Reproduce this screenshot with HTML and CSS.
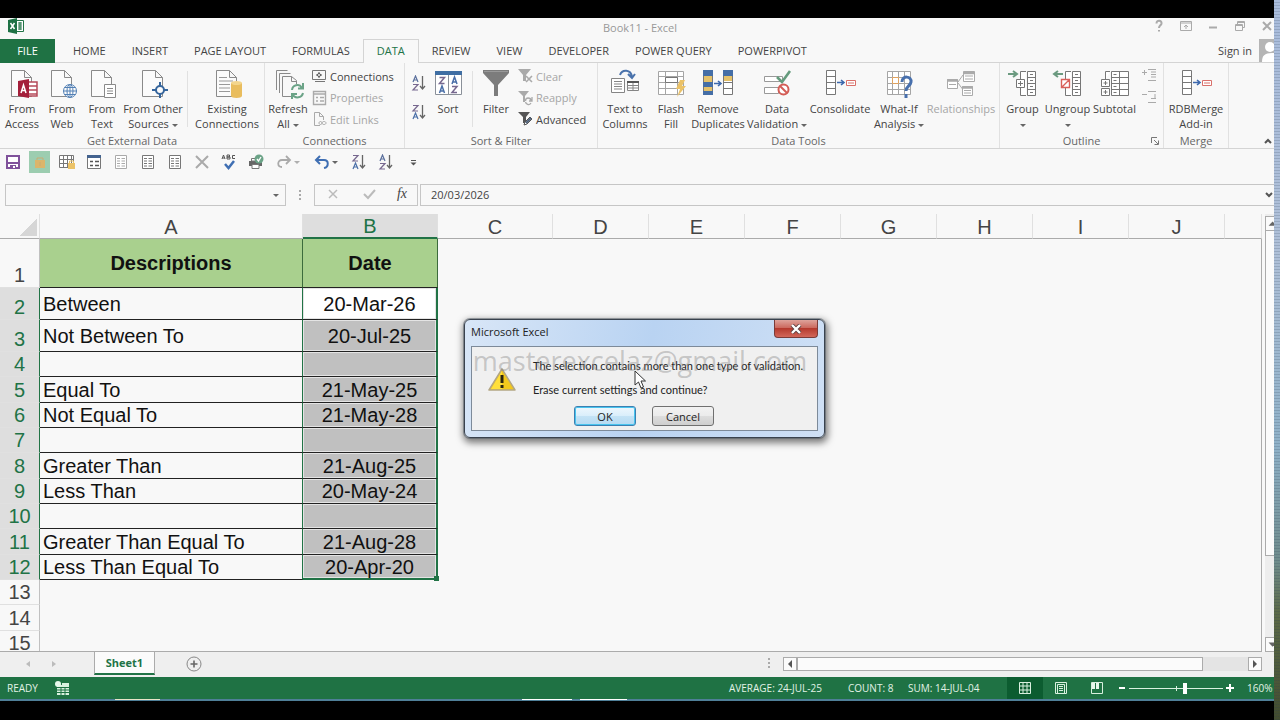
FILE: index.html
```html
<!DOCTYPE html>
<html lang="en">
<head>
    <meta charset="UTF-8">
    <meta name="viewport" content="width=device-width, initial-scale=1.0">
    <title>Book11 - Excel</title>
    <link rel="stylesheet" href="styles.css">
</head>
<body>
    <!-- Shared icon parts -->
    <svg class="sprite" aria-hidden="true">
        <symbol id="page" viewBox="0 0 32 32">
            <path d="M5.500 2.500h13l7 7v19h-20zM18.500 2.500v7h7" fill="#fbfbfb" stroke="#8a8a8a"/>
        </symbol>
        <symbol id="az" viewBox="0 0 16 16">
            <path d="M2 7l2.500-6L7 7M3 5h3" fill="none" stroke="#5a6f9c" stroke-width="1.200"/>
            <path d="M2 9.500h5L2 15h5" fill="none" stroke="#77688f" stroke-width="1.200"/>
            <path d="M11.500 1v13M9 11l2.500 3 2.500-3" fill="none" stroke="#666" stroke-width="1.300"/>
        </symbol>
        <symbol id="za" viewBox="0 0 16 16">
            <path d="M2 1.500h5L2 7h5" fill="none" stroke="#77688f" stroke-width="1.200"/>
            <path d="M2 15l2.500-6L7 15M3 13h3" fill="none" stroke="#4a6fa8" stroke-width="1.200"/>
            <path d="M11.500 1v13M9 11l2.500 3 2.500-3" fill="none" stroke="#666" stroke-width="1.300"/>
        </symbol>
        <symbol id="merge" viewBox="0 0 32 32">
            <path d="M2.500 2.500h9v24h-9zM2.500 8.500h9M2.500 14.500h9M2.500 20.500h9" fill="#fff" stroke="#777"/>
            <path d="M13 14.500h6M17 12l3 2.500-3 2.500" fill="none" stroke="#3c68ad" stroke-width="1.600"/>
            <path d="M22.500 12.500h9v5h-9zM24 15h6" fill="#fff" stroke="#d9706b"/>
        </symbol>
        <symbol id="list" viewBox="0 0 16 16">
            <path d="M2.500 1.500h11v13h-11z" fill="#fff" stroke="currentColor"/>
            <path d="M4 4.500h3M8.500 4.500H12M4 7h3M8.500 7H12M4 9.500h3M8.500 9.500H12M4 12h3M8.500 12H12" fill="none" stroke="currentColor"/>
        </symbol>
    </svg>

    <div class="app">
        <!-- Title bar -->
        <header class="titlebar">
            <svg class="logo" viewBox="0 0 16 16">
                <path d="M8 2.500h7.500v11H8z" fill="#fff" stroke="#217346"/>
                <path d="M10 5h4M10 7h4M10 9h4M10 11h4M12 4v8" stroke="#217346"/>
                <path d="M0 2l9-2v16l-9-2z" fill="#1e7145"/>
                <path d="M2.500 5l4 6M6.500 5l-4 6" stroke="#fff" stroke-width="1.500"/>
            </svg>
            <h1>Book11 - Excel</h1>
            <div class="window-buttons">
                <button aria-label="Help"><svg viewBox="0 0 16 16"><path d="M5.500 5.500c0-4 5.500-3.500 5 0-.3 1.800-2.500 2-2.500 4.500M8 12v1.500" fill="none" stroke="currentColor" stroke-width="2"/></svg></button>
                <button aria-label="Ribbon display options"><svg viewBox="0 0 16 16"><path d="M2.500 3.500h11v9h-11zM2.500 5h11M8 11V7M6 9l2-2 2 2" fill="none" stroke="currentColor"/></svg></button>
                <button aria-label="Minimize"><svg viewBox="0 0 16 16"><path d="M4 9.500h8" stroke="currentColor" stroke-width="2"/></svg></button>
                <button aria-label="Restore"><svg viewBox="0 0 16 16"><path d="M3.500 6.500h7v6h-7zM3.500 7.500h7M5.500 6V3.500h7v6H11M5.500 4.500h7" fill="none" stroke="currentColor"/></svg></button>
                <button aria-label="Close"><svg viewBox="0 0 16 16"><path d="M4 4l8 8M12 4l-8 8" stroke="currentColor" stroke-width="2"/></svg></button>
            </div>
        </header>

        <!-- Ribbon tabs -->
        <nav class="tabs">
            <button class="tab file">FILE</button>
            <button class="tab">HOME</button>
            <button class="tab">INSERT</button>
            <button class="tab">PAGE LAYOUT</button>
            <button class="tab">FORMULAS</button>
            <button class="tab active">DATA</button>
            <button class="tab">REVIEW</button>
            <button class="tab">VIEW</button>
            <button class="tab">DEVELOPER</button>
            <button class="tab">POWER QUERY</button>
            <button class="tab">POWERPIVOT</button>
            <a class="sign-in" href="#">Sign in</a>
            <svg class="avatar" viewBox="0 0 15 23"><path d="M0 0h15v23H0z" fill="#b5b5b5"/><circle cx="11" cy="8" r="5" fill="#fff"/><path d="M3 23c0-7 3-9 12-9v9z" fill="#fff"/></svg>
        </nav>

        <!-- Ribbon -->
        <section class="ribbon">
            <div class="group external">
                <div class="tools">
                    <button class="big">
                        <svg viewBox="0 0 32 32"><use href="#page"/><path d="M23 14h8v14h-8M23 18h8M23 22h8M23 26h8" fill="#fff" stroke="#b5495a" stroke-width="1.500"/><path d="M12 13l11-2v19l-11-2z" fill="#a4203b"/><path d="M15 25l2.500-8 2.500 8M16 22.500h3.500" fill="none" stroke="#fff" stroke-width="1.500"/></svg>
                        <span>From<br>Access</span>
                    </button>
                    <button class="big">
                        <svg viewBox="0 0 32 32"><use href="#page"/><g fill="#fbfbfb" stroke="#5280b5"><circle cx="24" cy="23" r="6.500"/><ellipse cx="24" cy="23" rx="3" ry="6.500"/><path d="M17.500 23h13M18.500 19.500h11M18.500 26.500h11M24 16.500v13"/></g></svg>
                        <span>From<br>Web</span>
                    </button>
                    <button class="big">
                        <svg viewBox="0 0 32 32"><use href="#page"/><path d="M18.500 16.500h11v13h-11zM21 20.500h6M21 23h6M21 25.500h6" fill="#fff" stroke="#8a8a8a"/></svg>
                        <span>From<br>Text</span>
                    </button>
                    <button class="big">
                        <svg viewBox="0 0 32 32"><use href="#page"/><path d="M23 14v16M15 22h16" stroke="#35659c" stroke-width="2"/><circle cx="23" cy="22" r="4" fill="#fbfbfb" stroke="#35659c" stroke-width="2"/></svg>
                        <span>From Other<br>Sources <i class="caret"></i></span>
                    </button>
                    <div class="rule"></div>
                    <button class="big">
                        <svg viewBox="0 0 32 32"><use href="#page"/><path d="M8 9.500h8M8 13h14M8 16.500h11M8 20h11M8 23.500h11" stroke="#999"/><path d="M20 15v13c0 2.500 11 2.500 11 0V15z" fill="#e9bd5e"/><ellipse cx="25.500" cy="15" rx="5.500" ry="2" fill="#f3d58c"/></svg>
                        <span>Existing<br>Connections</span>
                    </button>
                </div>
                <h2>Get External Data</h2>
            </div>

            <div class="group connections">
                <div class="tools">
                    <button class="big">
                        <svg viewBox="0 0 32 32"><path d="M4.500 22V2.500h11M7.500 25V5.500h11M24.500 16v-3.500l-5-4h-9v20h9M19.500 8.500v5h5" fill="none" stroke="#8a8a8a"/><path d="M20 22c.5-5 7-7 10-2M31 15v5.500h-5M31 25c-1 5-8 6-10.500 1.500M20 31v-5h5" fill="none" stroke="#6ba387" stroke-width="2"/></svg>
                        <span>Refresh<br>All <i class="caret"></i></span>
                    </button>
                    <div class="stack">
                        <button><svg viewBox="0 0 16 16"><path d="M1.500 2.500h13v9h-13zM4 13.500h10" fill="none" stroke="#777"/><path d="M8 4v6M5 7h6" stroke="#555"/><circle cx="8" cy="7" r="1.500" fill="#fff" stroke="#555"/></svg>Connections</button>
                        <button disabled><svg viewBox="0 0 16 16"><path d="M2.500 1.500h12v13h-12zM2.500 4h12M5 7.500h2M9 7.500h4M5 11h2M9 11h4" fill="none" stroke="#aaa" stroke-width="1.400"/></svg>Properties</button>
                        <button disabled><svg viewBox="0 0 16 16"><path d="M9 14.500H3.500v-13h5l4 4V9M8.500 1.500v4h4M8 12c0-2 3-2 3 0s4 2 4 0-4-2-4 0-3 2-3 0" fill="none" stroke="#aaa"/></svg>Edit Links</button>
                    </div>
                </div>
                <h2>Connections</h2>
            </div>

            <div class="group sorting">
                <div class="tools">
                    <div class="sort-pair">
                        <button aria-label="Sort A to Z"><svg viewBox="0 0 16 16"><use href="#az"/></svg></button>
                        <button aria-label="Sort Z to A"><svg viewBox="0 0 16 16"><use href="#za"/></svg></button>
                    </div>
                    <button class="big">
                        <svg viewBox="0 0 32 32"><path d="M3.500 4.500h26v22h-26zM16.500 7v19" fill="#fff" stroke="#8a9099"/><path d="M3 3h27v4H3z" fill="#3f6ea3"/><path d="M7.500 9.500h5l-5 6h5M20 18.500h5l-5 6h5" fill="none" stroke="#77688f" stroke-width="1.500"/><path d="M7.500 25l2.500-7 2.500 7M8.500 23h3.500M20 16l2.500-7 2.500 7M21 14h3.500" fill="none" stroke="#4a6fa8" stroke-width="1.500"/></svg>
                        <span>Sort</span>
                    </button>
                    <div class="rule"></div>
                    <button class="big">
                        <svg viewBox="0 0 32 32"><path d="M3 2h26v3L18 17v11h-4V17L3 5z" fill="#7c7c7c"/><path d="M4 3.500h24" stroke="#999"/></svg>
                        <span>Filter</span>
                    </button>
                    <div class="stack">
                        <button disabled><svg viewBox="0 0 16 16"><path d="M1 1h13L9 7v6H6V7z" fill="#aaa"/><path d="M9 8l6 6M15 8l-6 6" stroke="#aaa" stroke-width="1.600"/></svg>Clear</button>
                        <button disabled><svg viewBox="0 0 16 16"><path d="M1 1h11L8 6v6H6V6z" fill="#aaa"/><path d="M8.500 11c0-4 5-4 6 0M15 7v4h-3M14 13c-2 3-5 1-5.500-1" fill="none" stroke="#aaa" stroke-width="1.300"/></svg>Reapply</button>
                        <button><svg viewBox="0 0 16 16"><path d="M1 1h12L9 6v6H6V6z" fill="#555"/><path d="M7 14l1-3 5-5 2 2-5 5z" fill="#fff" stroke="#555"/><path d="M9 12l5-5" stroke="#4c5f78" stroke-width="2"/></svg>Advanced</button>
                    </div>
                </div>
                <h2>Sort &amp; Filter</h2>
            </div>

            <div class="group data-tools">
                <div class="tools">
                    <button class="big">
                        <svg viewBox="0 0 32 32"><path d="M2.500 10.500h13v14h-13zM5 13.500h8M5 16h8M5 18.500h8M5 21h8M18.500 13.500h11v9h-11zM18.500 17.500h11M18.500 20h11M24 14v8" fill="#fff" stroke="#858585"/><path d="M18 14h12" stroke="#555" stroke-width="2"/><path d="M11 7c2-6 11-6 12 2M19 6l4 4 3-4" fill="none" stroke="#4a72ab" stroke-width="2"/></svg>
                        <span>Text to<br>Columns</span>
                    </button>
                    <button class="big">
                        <svg viewBox="0 0 32 32"><path d="M3.500 3.500h25v23h-25zM3.500 8.500h25M3.500 14.500h25M3.500 20.500h25M10.500 3.500v23M22.500 3.500v23" fill="#fff" stroke="#a5a5a5"/><path d="M10.500 9.500h12v5h-12z" fill="#fff" stroke="#777"/><path d="M25 12h5l-3 6h4l-9 11 3-8h-4z" fill="#ebc267"/></svg>
                        <span>Flash<br>Fill</span>
                    </button>
                    <button class="big">
                        <svg viewBox="0 0 32 32"><path d="M1.500 2.500h9v24h-9zM21.500 2.500h9v24h-9zM21.500 8.500h9M21.500 14.500h9M21.500 20.500h9" fill="#fff" stroke="#777"/><path d="M1 2h10v6H1zM1 14h10v5H1zM1 23h10v4H1zM21 2h10v6H21z" fill="#456ea6"/><path d="M2 8h8v6H2zM2 19h8v4H2zM22 8h8v5h-8z" fill="#e5c169"/><path d="M12 15.500h6M16 13l3 2.500-3 2.500" fill="none" stroke="#3c68ad" stroke-width="1.600"/></svg>
                        <span>Remove<br>Duplicates</span>
                    </button>
                    <button class="big">
                        <svg viewBox="0 0 32 32"><path d="M3.500 8.500h18v5h-18zM3.500 19.500h14v6h-14z" fill="#fff" stroke="#999"/><path d="M16 9l5 5 8-11" fill="none" stroke="#659b7d" stroke-width="2.600"/><circle cx="22.500" cy="21.500" r="5" fill="#fff" stroke="#d35c55" stroke-width="2"/><path d="M19 18l7 7" stroke="#d35c55" stroke-width="2"/></svg>
                        <span>Data<br>Validation <i class="caret"></i></span>
                    </button>
                    <button class="big">
                        <svg viewBox="0 0 32 32"><use href="#merge"/></svg>
                        <span>Consolidate</span>
                    </button>
                    <button class="big">
                        <svg viewBox="0 0 32 32"><path d="M4.500 3.500h23v23h-23zM4.500 9.500h23M4.500 15.500h23M4.500 21.500h23M9.500 3.500v23M15.500 3.500v23M21.500 3.500v23" fill="#fff" stroke="#a5a5a5"/><path d="M9.500 9.500h6v6h-6z" fill="#fff" stroke="#e0a25e"/><path d="M19 14c0-7 10-6 9 0-.5 4-5 4-5 9M23 26v4" fill="none" stroke="#4870ad" stroke-width="3"/></svg>
                        <span>What-If<br>Analysis <i class="caret"></i></span>
                    </button>
                    <button class="big" disabled>
                        <svg viewBox="0 0 32 32"><path d="M13 14l5-7M13 15l6 8" stroke="#aaa"/><path d="M2.500 11.500h10v9h-10zM4 16.500h7M18.500 3.500h11v10h-11zM20 8h8M20 11h8M17.500 18.500h10v9h-10zM19 22.500h7M19 25h7" fill="#fff" stroke="#aaa"/><path d="M2 12.500h11M18 5h12M17 19.500h11" stroke="#aaa" stroke-width="2.500"/></svg>
                        <span>Relationships</span>
                    </button>
                </div>
                <h2>Data Tools</h2>
            </div>

            <div class="group outline">
                <div class="tools">
                    <button class="big">
                        <svg viewBox="0 0 32 32"><path d="M20.500 3.500h8v24h-8zM20.500 9.500h8M20.500 15.500h8M20.500 21.500h8M23 6.500h3M23 12.500h3M23 18.500h3M23 24.500h3M19 3.500h-5.500v24H19" fill="#fff" stroke="#777"/><path d="M9.500 11.500h8v8h-8zM13.500 13v5M11 15.500h5" fill="#fff" stroke="#777"/><path d="M1 6h8M6 3l4 3-4 3" fill="none" stroke="#6b9a80" stroke-width="2"/></svg>
                        <span>Group<br><i class="caret"></i></span>
                    </button>
                    <button class="big">
                        <svg viewBox="0 0 32 32"><path d="M20.500 3.500h8v24h-8zM20.500 9.500h8M20.500 15.500h8M20.500 21.500h8M23 6.500h3M23 12.500h3M23 18.500h3M23 24.500h3M19 3.500h-5.500v24H19" fill="#fff" stroke="#777"/><path d="M9.500 11.500h8v8h-8zM10 19l7-7" fill="#fff" stroke="#d9605a" stroke-width="1.400"/><path d="M2 6h9M6 3L2 6l4 3" fill="none" stroke="#6b9a80" stroke-width="2"/></svg>
                        <span>Ungroup<br><i class="caret"></i></span>
                    </button>
                    <button class="big">
                        <svg viewBox="0 0 32 32"><path d="M12.500 3.500h17v24h-17zM12.500 9.500h17M12.500 15.500h17M12.500 21.500h17M20.500 3.500v24M14.500 6.500h3M14.500 12.500h3M14.500 18.500h3M14.500 24.500h3M11 3.500H6.500V12" fill="#fff" stroke="#777"/><path d="M2.500 11.500h8v7h-8zM6.500 13v4M4.500 15h4M2.500 20.500h8v7h-8zM6.500 22v4M4.500 24h4" fill="#fff" stroke="#777"/></svg>
                        <span>Subtotal</span>
                    </button>
                    <div class="detail-pair">
                        <button disabled aria-label="Show detail"><svg viewBox="0 0 16 16"><path d="M1 5.500h5M3.500 3v5M7 2.500h8M10 5h5M10 7.500h5M10 10h5M7 13.500h8" stroke="#aaa"/></svg></button>
                        <button disabled aria-label="Hide detail"><svg viewBox="0 0 16 16"><path d="M1 5.500h5M7 2.500h8M14 5v4M10 9.500h5M7 13.500h8" stroke="#aaa"/></svg></button>
                    </div>
                </div>
                <h2>Outline</h2>
                <button class="launcher" aria-label="Outline settings"><svg viewBox="0 0 8 8"><path d="M.5 6V.5H6M3 3l4 4M7.500 3.500v4h-4" fill="none" stroke="#777"/></svg></button>
            </div>

            <div class="group addin">
                <div class="tools">
                    <button class="big">
                        <svg viewBox="0 0 32 32"><use href="#merge"/></svg>
                        <span>RDBMerge<br>Add-in</span>
                    </button>
                </div>
                <h2>Merge</h2>
            </div>
            <button class="collapse" aria-label="Collapse the ribbon"><svg viewBox="0 0 8 8"><path d="M1 6l3-3 3 3" fill="none" stroke="#555" stroke-width="2"/></svg></button>
        </section>

        <!-- Quick access toolbar -->
        <section class="quick">
            <button aria-label="Save"><svg viewBox="0 0 16 16"><path d="M2 2h12v12H2z" fill="#fff" stroke="#80529b" stroke-width="2"/><path d="M3 8h10v2H3zM5 11h6v4H5z" fill="#80529b"/><path d="M8 12h2v2H8z" fill="#fff"/></svg></button>
            <button class="on" aria-label="Lock cell"><svg viewBox="0 0 16 16"><path d="M3 6h10v8H3z" fill="#dcb56b"/><path d="M5 6V4h6v2M8 8v4" fill="none" stroke="#c9ac73"/></svg></button>
            <button aria-label="Protect sheet"><svg viewBox="0 0 16 16"><path d="M.5 1.500h14v12H.5zM.5 5.500h14M.5 9.500h14M4.500 1.500v12M8.500 1.500v12M12.500 1.500v12" fill="#fff" stroke="#777"/><path d="M9 9h7v6H9z" fill="#ebc267"/><path d="M10.500 9V7h4v2" fill="none" stroke="#ebc267"/></svg></button>
            <button aria-label="Form"><svg viewBox="0 0 16 16"><path d="M1.500 1.500h13v13h-13z" fill="#fff" stroke="#777"/><path d="M1 1h14v3H1z" fill="#44638f"/><path d="M4 7.500h3M9 7.500h4M4 11.500h3M9 11.500h4" stroke="#555" stroke-width="1.500"/></svg></button>
            <button class="dim" aria-label="Page setup"><svg viewBox="0 0 16 16"><use href="#list"/></svg></button>
            <button aria-label="Columns"><svg viewBox="0 0 16 16"><use href="#list"/></svg></button>
            <button aria-label="Rows"><svg viewBox="0 0 16 16"><use href="#list"/></svg></button>
            <button class="dim" aria-label="Delete"><svg viewBox="0 0 16 16"><path d="M2 2l12 12M14 2L2 14" stroke="currentColor" stroke-width="2"/></svg></button>
            <button aria-label="Spelling"><svg viewBox="0 0 16 16"><path d="M1 5l1.500-4L4 5M1.500 4h2M6 1h2.500v2H6zM6 3h3v2H6zM14 1.500h-2.500v3H14" fill="none" stroke="#555"/><path d="M4 10l3.500 4L13 7" fill="none" stroke="#3f6fb3" stroke-width="2.500"/></svg></button>
            <button aria-label="Quick print"><svg viewBox="0 0 16 16"><path d="M1 7h13v5H1z" fill="#666"/><path d="M3.500 4.500h6V7h-6zM4 10.500h7v4H4z" fill="#fff" stroke="#777"/><circle cx="11" cy="5" r="4.500" fill="#6ba387"/><path d="M9 5l1.500 2L13 3" fill="none" stroke="#fff" stroke-width="1.300"/></svg></button>
            <button class="split dim" aria-label="Redo"><svg viewBox="0 0 16 16"><path d="M14 6H6C1 6 1 13 6 13M10 2l4 4-4 4" fill="none" stroke="currentColor" stroke-width="1.800"/></svg><i class="caret"></i></button>
            <button class="split" aria-label="Undo"><svg viewBox="0 0 16 16"><path d="M2 6h8c5 0 5 7 0 8M6 2L2 6l4 4" fill="none" stroke="#3f6fb3" stroke-width="2"/></svg><i class="caret"></i></button>
            <button aria-label="Sort descending"><svg viewBox="0 0 16 16"><use href="#za"/></svg></button>
            <button aria-label="Sort ascending"><svg viewBox="0 0 16 16"><use href="#az"/></svg></button>
            <button aria-label="Customize toolbar"><svg viewBox="0 0 16 16"><path d="M6 6.500h5" stroke="#555"/><path d="M5.500 8.500h6l-3 3z" fill="#555"/></svg></button>
        </section>

        <!-- Formula bar -->
        <section class="formula">
            <div class="name-box">
                <input type="text" aria-label="Name box">
                <i class="caret"></i>
            </div>
            <i class="grip"></i>
            <div class="formula-buttons">
                <button aria-label="Cancel entry"><svg viewBox="0 0 16 16"><path d="M4 4l8 8M12 4l-8 8" stroke="#bbb" stroke-width="1.500"/></svg></button>
                <button aria-label="Enter"><svg viewBox="0 0 16 16"><path d="M3 8l4 4 7-8" fill="none" stroke="#bbb" stroke-width="2"/></svg></button>
                <button class="fx" aria-label="Insert function">fx</button>
            </div>
            <div class="formula-text">
                <input type="text" value="20/03/2026" aria-label="Formula bar">
                <svg viewBox="0 0 8 8"><path d="M1 2l3 3 3-3" fill="none" stroke="#555" stroke-width="2"/></svg>
            </div>
        </section>

        <!-- Worksheet -->
        <main class="workspace">
            <div class="sheet">
                <table>
                    <colgroup>
                        <col class="num"><col class="a"><col class="b"><col class="c">
                        <col class="std"><col class="std"><col class="std"><col class="std"><col class="std"><col class="std"><col class="std">
                        <col>
                    </colgroup>
                    <thead>
                        <tr>
                            <th class="corner"></th><th>A</th><th class="picked">B</th><th>C</th><th>D</th><th>E</th><th>F</th><th>G</th><th>H</th><th>I</th><th>J</th><th></th>
                        </tr>
                    </thead>
                    <tbody>
                        <tr class="heading"><th>1</th><td>Descriptions</td><td>Date</td><td class="blank" colspan="9" rowspan="15"></td></tr>
                        <tr class="tall picked"><th>2</th><td>Between</td><td class="current">20-Mar-26</td></tr>
                        <tr class="tall picked"><th>3</th><td>Not Between To</td><td>20-Jul-25</td></tr>
                        <tr class="picked"><th>4</th><td></td><td></td></tr>
                        <tr class="picked"><th>5</th><td>Equal To</td><td>21-May-25</td></tr>
                        <tr class="picked"><th>6</th><td>Not Equal To</td><td>21-May-28</td></tr>
                        <tr class="picked"><th>7</th><td></td><td></td></tr>
                        <tr class="picked"><th>8</th><td>Greater Than</td><td>21-Aug-25</td></tr>
                        <tr class="picked"><th>9</th><td>Less Than</td><td>20-May-24</td></tr>
                        <tr class="picked"><th>10</th><td></td><td></td></tr>
                        <tr class="picked"><th>11</th><td>Greater Than Equal To</td><td>21-Aug-28</td></tr>
                        <tr class="picked last"><th>12</th><td>Less Than Equal To</td><td>20-Apr-20<i class="handle"></i></td></tr>
                        <tr><th>13</th><td></td><td></td></tr>
                        <tr><th>14</th><td></td><td></td></tr>
                        <tr><th>15</th><td></td><td></td></tr>
                    </tbody>
                </table>
            </div>
            <div class="vscroll">
                <button aria-label="Scroll up"><svg viewBox="0 0 16 16"><path d="M3 10h9L7.500 5z" fill="#666"/></svg></button>
                <div class="thumb"></div>
                <div class="track"></div>
                <button aria-label="Scroll down"><svg viewBox="0 0 16 16"><path d="M3 5h9l-4.500 5z" fill="#666"/></svg></button>
            </div>
        </main>

        <!-- Sheet tabs -->
        <section class="sheet-bar">
            <button class="arrow" aria-label="Previous sheet"><svg viewBox="0 0 8 8"><path d="M6 1v6L2 4z" fill="#bbb"/></svg></button>
            <button class="arrow" aria-label="Next sheet"><svg viewBox="0 0 8 8"><path d="M2 1v6l4-3z" fill="#bbb"/></svg></button>
            <button class="sheet-tab">Sheet1</button>
            <button class="add" aria-label="New sheet"><svg viewBox="0 0 16 16"><circle cx="8" cy="8" r="7" fill="none" stroke="#888"/><path d="M4.500 8h7M8 4.500v7" stroke="#666" stroke-width="1.600"/></svg></button>
            <i class="grip"></i>
            <div class="hscroll">
                <button aria-label="Scroll left"><svg viewBox="0 0 8 8"><path d="M6 0v8L2 4z" fill="#555"/></svg></button>
                <div class="thumb"></div>
                <div class="track"></div>
                <button aria-label="Scroll right"><svg viewBox="0 0 8 8"><path d="M2 0v8l4-4z" fill="#555"/></svg></button>
            </div>
        </section>

        <!-- Status bar -->
        <footer class="status">
            <span class="ready">READY</span>
            <svg class="macro" viewBox="0 0 16 16"><path d="M3 5h12v10H3z" fill="#d9f0df"/><path d="M3 7.500h12M3 10h12M3 12.500h12M7 7v8M11 7v8" stroke="#1f7244"/><circle cx="4" cy="4" r="3" fill="#e8f8ec"/><path d="M8 3h7v2H8z" fill="#d9f0df"/></svg>
            <span class="average">AVERAGE: 24-JUL-25</span>
            <span class="count">COUNT: 8</span>
            <span class="sum">SUM: 14-JUL-04</span>
            <button class="view on" aria-label="Normal view"><svg viewBox="0 0 16 16"><path d="M2.500 2.500h11v11h-11zM2.500 6h11M2.500 10h11M6 2.500v11M10 2.500v11" fill="none" stroke="#d9f0df"/></svg></button>
            <button class="view" aria-label="Page layout view"><svg viewBox="0 0 16 16"><path d="M2.500 2.500h11v11h-11zM4.500 4.500h7v9h-7zM6 6.500h4M6 8.500h4M6 10.500h4" fill="none" stroke="#d9f0df"/></svg></button>
            <button class="view" aria-label="Page break view"><svg viewBox="0 0 16 16"><path d="M2.500 2.500h11v11h-11z" fill="none" stroke="#d9f0df"/><path d="M3 3h3v6H3zM7 3h3v6H7z" fill="#e8f8ec"/></svg></button>
            <button class="zoom-step" aria-label="Zoom out"><svg viewBox="0 0 8 8"><path d="M1 4h6" stroke="#fff" stroke-width="2"/></svg></button>
            <input class="zoom" type="range" min="0" max="100" value="60" aria-label="Zoom">
            <button class="zoom-step" aria-label="Zoom in"><svg viewBox="0 0 8 8"><path d="M0 4h8M4 0v8" stroke="#fff" stroke-width="2"/></svg></button>
            <span class="percent">160%</span>
        </footer>
        <div class="taskbar"></div>
    </div>
    <div class="wallpaper"></div>

    <!-- Message box -->
    <div class="dialog" role="dialog" aria-labelledby="dialog-title">
        <div class="dialog-head">
            <h3 id="dialog-title">Microsoft Excel</h3>
            <button class="dialog-close" aria-label="Close"><svg viewBox="0 0 12 10"><path d="M2 1l8 8M10 1L2 9" stroke="#5b4040" stroke-width="4"/><path d="M2 1l8 8M10 1L2 9" stroke="#fff" stroke-width="2.400"/></svg></button>
        </div>
        <div class="dialog-body">
            <svg class="warning" viewBox="0 0 28 24"><path d="M14 1L1 22h26z" fill="#f3c81c" stroke="#b3a684" stroke-width="1.500" stroke-linejoin="round"/><path d="M14 3l-11 18h11z" fill="#ffdf3c"/><path d="M14 7v8M14 17v3" stroke="#2a2410" stroke-width="3"/></svg>
            <div class="message">
                <p>The selection contains more than one type of validation.</p>
                <p>Erase current settings and continue?</p>
            </div>
            <div class="answers">
                <button class="default">OK</button>
                <button>Cancel</button>
            </div>
        </div>
    </div>
    <div class="watermark">masterexcelaz@gmail.com</div>
    <svg class="pointer" viewBox="0 0 12 19"><path d="M1 1v14l3.500-3 2.500 6 2.500-1-2.500-6h4.500z" fill="#fff" stroke="#333"/></svg>
</body>
</html>
```

FILE: styles.css
```css
* {
    box-sizing: border-box;
}

body {
    display: flex;
    height: 100vh;
    margin: 0;
    overflow: hidden;
    background: #000;
    color: #444;
    font: 11px/15px "Open Sans", "Noto Sans", sans-serif;
}

button,
input {
    margin: 0;
    padding: 0;
    border: 0;
    background: none;
    color: inherit;
    font: inherit;
}

button:disabled {
    color: #a6a6a6;
}

h1, h2, h3, p {
    margin: 0;
    font-size: 11px;
    font-weight: normal;
}

svg {
    display: block;
    flex: none;
    width: 16px;
    height: 16px;
}

.sprite {
    position: absolute;
    width: 0;
    height: 0;
}

.app {
    display: flex;
    flex: 1;
    flex-direction: column;
    min-width: 0;
    margin: 18px 0 19px;
    overflow: hidden;
    background: #f8f8f8;
}

.wallpaper {
    width: 6px;
    background:
        repeating-linear-gradient(transparent 0 2px, rgba(40, 60, 80, 0.18) 2px 3px),
        linear-gradient(#a9bcdc, #afc0d8 35%, #8fb1c8 62%, #6f8c8c 78%, #5c6a48 85%, #424c30);
}

.caret {
    display: inline-block;
    border: 3px solid transparent;
    border-top-color: #666;
    border-bottom: 0;
    vertical-align: middle;
}

.grip {
    width: 2px;
    height: 11px;
    background: repeating-linear-gradient(#aaa 0 2px, transparent 2px 4px);
}

/* Title bar */
.titlebar {
    position: relative;
    display: flex;
    justify-content: space-between;
    height: 21px;
    padding-left: 8px;
}

.titlebar h1 {
    position: absolute;
    left: 6px;
    right: 0;
    top: 2px;
    color: #999;
    text-align: center;
}

.window-buttons {
    display: flex;
    margin-right: -6px;
    color: #aaa;
}

.window-buttons button {
    display: flex;
    justify-content: center;
    width: 27px;
}

/* Tabs */
.tabs {
    display: flex;
    height: 24px;
    border-bottom: 1px solid #d4d4d4;
}

.tab {
    height: 24px;
    padding: 0 13px 2px;
}

.tab.file {
    width: 55px;
    margin-right: 5px;
    background: #1f7244;
    color: #fff;
}

.tab.active {
    border: 1px solid #d4d4d4;
    border-bottom: 0;
    background: #f8f8f8;
    color: #217346;
}

.sign-in {
    margin-left: auto;
    padding: 4px 7px;
    color: #444;
    text-decoration: none;
}

.avatar {
    width: 15px;
    height: 23px;
}

/* Ribbon */
.ribbon {
    display: flex;
    height: 86px;
    border-bottom: 1px solid #d4d4d4;
}

.group {
    position: relative;
    flex: none;
    border-right: 1px solid #e1e1e1;
}

.group h2 {
    color: #666;
    text-align: center;
}

.tools {
    display: grid;
    height: 70px;
}

.external {
    width: 265px;
}

.external .tools {
    grid-template-columns: 40px 40px 40px 62px 6px 74px;
    padding-left: 2px;
}

.connections {
    width: 140px;
}

.connections .tools {
    grid-template-columns: 46px 1fr;
}

.sorting {
    width: 193px;
}

.sorting .tools {
    grid-template-columns: 22px 42px 6px 42px 1fr;
}

.data-tools {
    width: 402px;
}

.data-tools .tools {
    grid-template-columns: 54px 38px 56px 62px 64px 54px 70px;
}

.outline {
    width: 164px;
}

.outline .tools {
    grid-template-columns: 45px 45px 49px 1fr;
}

.addin {
    width: 65px;
}

.big {
    display: flex;
    flex-direction: column;
    align-items: center;
    padding-top: 5px;
    white-space: nowrap;
}

.big svg {
    width: 32px;
    height: 32px;
    margin-bottom: 1px;
}

.rule {
    width: 1px;
    height: 56px;
    margin: 8px auto;
    background: #e1e1e1;
}

.stack {
    display: grid;
    grid-template-rows: 22px 21px 22px;
    margin-top: 2px;
}

.stack button {
    display: flex;
    align-items: center;
    gap: 3px;
}

.sort-pair,
.detail-pair {
    display: flex;
    flex-direction: column;
    gap: 13px;
    padding: 12px 0 0 6px;
}

.detail-pair {
    gap: 6px;
    padding: 4px 0 0 2px;
}

.launcher {
    position: absolute;
    right: 4px;
    bottom: 3px;
}

.launcher svg,
.collapse svg {
    width: 8px;
    height: 8px;
}

.collapse {
    align-self: flex-end;
    margin-left: auto;
    padding: 3px 2px;
}

/* Quick access toolbar */
.quick {
    display: flex;
    align-items: center;
    height: 26px;
    margin-left: -1px;
}

.quick button {
    display: flex;
    align-items: center;
    justify-content: center;
    width: 27px;
    height: 22px;
    color: #777;
}

.quick .on {
    width: 21px;
    margin: 0 3px;
    background: #9ccdb0;
}

.quick .split {
    gap: 2px;
    width: 38px;
}

.quick .dim {
    color: #aaa;
}

.dim .caret {
    opacity: 0.5;
}

/* Formula bar */
.formula {
    display: flex;
    align-items: center;
    height: 22px;
    margin: 9px 0 8px;
    padding-left: 5px;
}

.name-box,
.formula-buttons,
.formula-text {
    display: flex;
    align-items: center;
    height: 22px;
    border: 1px solid #c6c6c6;
}

.name-box {
    width: 281px;
    margin-right: 13px;
    padding-right: 6px;
}

.name-box input,
.formula-text input {
    flex: 1;
    min-width: 0;
    padding-bottom: 2px;
}

.formula-buttons {
    justify-content: space-around;
    width: 104px;
    margin: 0 2px 0 13px;
    padding-bottom: 2px;
}

.fx {
    font: italic 14px/16px "Liberation Serif", serif;
}

.formula-text {
    flex: 1;
    padding-left: 10px;
    border-right: 0;
}

.formula-text svg {
    width: 8px;
    height: 8px;
    margin-right: 1px;
}

/* Worksheet */
.workspace {
    display: flex;
    flex: 1;
    gap: 3px;
    min-height: 0;
}

.sheet {
    flex: 1;
    min-width: 0;
    overflow: hidden;
    border-bottom: 1px solid #ababab;
}

.sheet table {
    width: 100%;
    border-spacing: 0;
    table-layout: fixed;
    color: #111;
    font: 20px/24px "Liberation Sans", Arial, sans-serif;
}

.num { width: 40px; }
.a { width: 263px; }
.b { width: 135px; }
.c { width: 115px; }
.std { width: 96px; }

.sheet th,
.sheet td {
    height: 25px;
    padding: 0;
    overflow: hidden;
    white-space: nowrap;
}

.sheet th {
    color: #444;
    font-weight: normal;
    vertical-align: bottom;
}

.sheet thead th {
    border-right: 1px solid #e0e0e0;
    border-bottom: 1px solid #ababab;
    line-height: 22px;
}

.sheet thead .picked {
    border-bottom: 2px solid #217346;
    background: #dedede;
    color: #217346;
}

.sheet .corner {
    background: linear-gradient(135deg, transparent 50%, #d6d6d6 50%) 20px 5px / 17px 17px no-repeat;
}

.sheet tbody th {
    border-right: 1px solid #c0c0c0;
    border-bottom: 1px solid #e0e0e0;
}

.sheet .picked th {
    border-right: 1px solid #217346;
    background: #dedede;
    color: #217346;
}

.sheet .tall td,
.sheet .tall th {
    height: 32px;
}

.sheet tbody tr:nth-child(3n+5) th {
    height: 26px;
}

.sheet .heading th {
    height: 49px;
}

.sheet .heading td {
    border-right: 1px solid #3c6b3c;
    border-bottom: 1px solid #222;
    background: #a9d08e;
    font-weight: bold;
    text-align: center;
}

.sheet .heading .blank {
    border: 0;
    border-right: 1px solid #ababab;
    background: none;
}

.sheet .picked td {
    padding-left: 3px;
    border-right: 1px solid #217346;
    border-bottom: 1px solid #222;
}

.sheet .picked td + td {
    position: relative;
    padding: 0;
    border-right: 2px solid #217346;
    background: #c0c0c0;
    box-shadow: inset 0 0 0 1px #e4e4e4;
    text-align: center;
}

.sheet .picked .current {
    background: #fff;
}

.sheet .last td + td {
    overflow: visible;
    border-bottom: 2px solid #217346;
    line-height: 22px;
}

.handle {
    position: absolute;
    right: -3px;
    bottom: -3px;
    width: 5px;
    height: 5px;
    background: #217346;
}

.vscroll {
    display: flex;
    flex-direction: column;
    width: 9px;
    padding-top: 2px;
    overflow: hidden;
    background: #ededed;
}

.vscroll button,
.vscroll .thumb {
    width: 17px;
    height: 15px;
    border: 1px solid #ababab;
    background: #fbfbfb;
}

.vscroll button svg {
    width: 14px;
    height: 14px;
}

.vscroll .thumb {
    flex: 4;
    border-top: 0;
}

.vscroll .track {
    flex: 1;
}

/* Sheet tabs */
.sheet-bar {
    display: flex;
    align-items: center;
    height: 25px;
    padding: 0 12px 2px 0;
    background: #efefef;
}

.arrow {
    display: flex;
    justify-content: center;
    width: 26px;
}

.arrow:first-child {
    margin-left: 15px;
}

.arrow svg {
    width: 8px;
    height: 8px;
}

.sheet-tab {
    align-self: flex-start;
    width: 61px;
    height: 23px;
    margin: 0 31px 0 27px;
    border: 1px solid #ababab;
    border-top: 0;
    border-bottom: 2px solid #217346;
    background: #fbfbfb;
    color: #217346;
    font-weight: bold;
}

.sheet-bar .grip {
    margin-left: auto;
}

.hscroll {
    display: flex;
    width: 479px;
    height: 14px;
    margin-left: 13px;
    background: #e4e4e4;
}

.hscroll button,
.hscroll .thumb {
    border: 1px solid #ababab;
    background: #fbfbfb;
}

.hscroll button {
    width: 14px;
    padding-left: 2px;
}

.hscroll svg {
    width: 8px;
    height: 8px;
}

.hscroll .thumb {
    flex: 9;
}

.hscroll .track {
    flex: 1;
}

/* Status bar */
.status {
    display: flex;
    align-items: center;
    height: 22px;
    background: #1f7244;
    color: #e2f3e7;
    font-size: 10px;
    white-space: nowrap;
}

.ready {
    width: 54px;
    padding-left: 7px;
}

.average {
    width: 119px;
    margin-left: auto;
}

.count {
    width: 60px;
}

.sum {
    width: 99px;
}

.view {
    display: flex;
    align-items: center;
    justify-content: center;
    width: 36px;
    height: 22px;
}

.view.on {
    background: #0c5c30;
}

.zoom-step svg {
    width: 8px;
    height: 8px;
}

.zoom-step {
    margin: 0 3px;
}

.zoom {
    appearance: none;
    width: 94px;
    height: 14px;
    background:
        linear-gradient(#d9f0df, #d9f0df) center / 100% 1px no-repeat,
        linear-gradient(#d9f0df, #d9f0df) center / 1px 5px no-repeat;
}

.zoom::-webkit-slider-thumb {
    appearance: none;
    width: 4px;
    height: 11px;
    background: #fff;
}

.percent {
    width: 27px;
    margin-left: 10px;
}

.taskbar {
    height: 2px;
    background:
        linear-gradient(#e8e4c8, #e8e4c8) 115px 0 / 45px 1px no-repeat,
        linear-gradient(#fff, #fff) 522px 0 / 50px 1px no-repeat,
        linear-gradient(#fff, #fff) 580px 0 / 47px 1px no-repeat,
        #4f7f98;
}

/* Message box */
.dialog {
    position: absolute;
    left: 464px;
    top: 319px;
    width: 361px;
    padding: 0 6px 6px;
    border: 1px solid #39424e;
    border-radius: 6px;
    background: linear-gradient(100deg, #d8e6f7, #b9d3f2 50%, #cfe0f5);
    box-shadow: 0 0 0 1px rgba(80, 90, 100, 0.5), 1px 3px 7px 2px rgba(0, 0, 0, 0.5);
    color: #222;
}

.dialog-head {
    display: flex;
    justify-content: space-between;
    height: 26px;
}

.dialog-head h3 {
    padding-top: 4px;
}

.dialog-close {
    display: flex;
    align-items: center;
    justify-content: center;
    width: 44px;
    height: 18px;
    border: 1px solid #7a3b38;
    border-top: 0;
    border-radius: 0 0 4px 4px;
    background: linear-gradient(#dea39b, #cc6a5f 45%, #b53a2e 50%, #d2675a);
}

.dialog-close svg {
    width: 12px;
    height: 10px;
}

.dialog-body {
    display: grid;
    grid-template-columns: 61px 1fr;
    border: 1px solid #7d8a99;
    padding: 11px 0 4px;
    background: #f0f0f0;
}

.warning {
    width: 28px;
    height: 24px;
    margin: 10px 0 0 16px;
}

.message {
    font-family: Lato, "Open Sans", sans-serif;
    white-space: nowrap;
}

.message p + p {
    margin-top: 9px;
}

.answers {
    display: flex;
    grid-column: 1 / -1;
    gap: 16px;
    margin: 9px 0 0 102px;
}

.answers button {
    width: 62px;
    height: 20px;
    border: 1px solid #707070;
    border-radius: 3px;
    background: linear-gradient(#f2f2f2, #ebebeb 50%, #dddddd 50%, #cfcfcf);
}

.answers .default {
    border-color: #3c7fb1;
    background: linear-gradient(#eef7fd, #d9eefb 50%, #c4e3f6 50%, #b5daf2);
    box-shadow: inset 0 0 0 1px #48c4ee;
}

.watermark {
    position: absolute;
    left: 0;
    right: 0;
    top: 343px;
    color: rgba(130, 130, 130, 0.4);
    font-size: 27px;
    line-height: 36px;
    text-align: center;
    pointer-events: none;
}

.pointer {
    position: absolute;
    left: 634px;
    top: 370px;
    width: 12px;
    height: 19px;
}
```
